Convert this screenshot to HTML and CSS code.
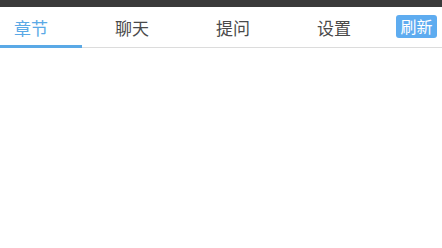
FILE: index.html
```html
<!DOCTYPE html>
<html>
<head>
<meta charset="utf-8">
<link rel="stylesheet" href="styles.css">
</head>
<body>
<div class="topbar"></div>
<nav class="tabs">
  <div class="tab active"><span>章节</span></div>
  <div class="tab"><span>聊天</span></div>
  <div class="tab"><span>提问</span></div>
  <div class="tab"><span>设置</span></div>
  <button class="refresh">刷新</button>
</nav>
</body>
</html>
```
FILE: styles.css
```css
html, body {
  margin: 0;
  padding: 0;
  background: #fff;
  font-family: "Noto Sans CJK SC", "Noto Sans", sans-serif;
}
.topbar {
  height: 7px;
  background: #3a3a3a;
}
.tabs {
  display: flex;
  align-items: stretch;
  height: 40px;
  border-bottom: 1px solid #dcdcdc;
  position: relative;
}
.tab {
  width: 101px;
  flex: none;
  display: flex;
  align-items: center;
  padding-left: 14px;
  box-sizing: border-box;
  font-size: 17px;
  color: #4a4a4a;
  position: relative;
}
.tab.active {
  color: #5aa9e6;
}
.tab.active::after {
  content: "";
  position: absolute;
  left: 0;
  bottom: -1px;
  width: 82px;
  height: 3px;
  background: #5aa9e6;
}
.refresh {
  margin: 8px 0 0 -8px;
  width: 41px;
  height: 23px;
  padding: 0;
  border: none;
  border-radius: 3px;
  background: #5eacf0;
  color: #fff;
  font-family: "Noto Sans CJK SC", sans-serif;
  font-size: 16px;
  line-height: 23px;
}
```
